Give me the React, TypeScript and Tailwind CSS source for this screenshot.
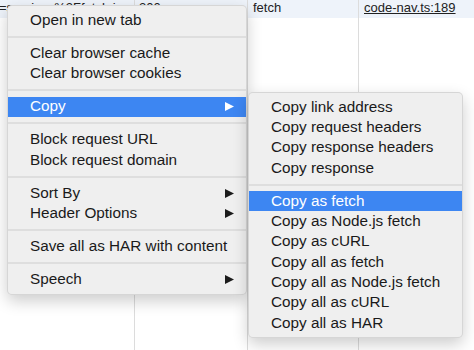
import React from "react";

type Entry = { label?: string; sep?: boolean; arrow?: boolean; active?: boolean };

const mainItems: Entry[] = [
  { label: "Open in new tab" },
  { sep: true },
  { label: "Clear browser cache" },
  { label: "Clear browser cookies" },
  { sep: true },
  { label: "Copy", arrow: true, active: true },
  { sep: true },
  { label: "Block request URL" },
  { label: "Block request domain" },
  { sep: true },
  { label: "Sort By", arrow: true },
  { label: "Header Options", arrow: true },
  { sep: true },
  { label: "Save all as HAR with content" },
  { sep: true },
  { label: "Speech", arrow: true },
];

const subItems: Entry[] = [
  { label: "Copy link address" },
  { label: "Copy request headers" },
  { label: "Copy response headers" },
  { label: "Copy response" },
  { sep: true },
  { label: "Copy as fetch", active: true },
  { label: "Copy as Node.js fetch" },
  { label: "Copy as cURL" },
  { label: "Copy all as fetch" },
  { label: "Copy all as Node.js fetch" },
  { label: "Copy all as cURL" },
  { label: "Copy all as HAR" },
];

function Arrow({ white }: { white?: boolean }) {
  return (
    <svg width="9" height="9" viewBox="0 0 9 9" className="shrink-0">
      <polygon points="0,0 9,4.5 0,9" fill={white ? "#ffffff" : "#1c1c1c"} />
    </svg>
  );
}

function Menu({ items }: { items: Entry[] }) {
  return (
    <div className="flex flex-col py-[4px]">
      {items.map((it, i) =>
        it.sep ? (
          <div key={i} className="h-[12.8px] flex items-center">
            <div className="h-[2px] w-full bg-[#dedede]" />
          </div>
        ) : (
          <div
            key={i}
            className={
              it.active
                ? "h-[20.33px] flex items-center justify-between pl-[22px] pr-[12px] bg-[#3d86f2] text-white"
                : "h-[20.33px] flex items-center justify-between pl-[22px] pr-[12px] text-[#1a1a1a]"
            }
          >
            <span className="whitespace-nowrap">{it.label}</span>
            {it.arrow && <Arrow white={it.active} />}
          </div>
        )
      )}
    </div>
  );
}

export default function App() {
  return (
    <div
      className="relative w-[474px] h-[350px] overflow-hidden bg-white"
      style={{ fontFamily: '"Liberation Sans", Arial, sans-serif' }}
    >
      {/* background table */}
      <div className="flex h-full text-[13px] leading-[15px] text-[#222]">
        <div className="w-[135px] border-r border-[#dcdcdc] flex flex-col">
          <div className="h-[18px] bg-[#eef3fa] overflow-hidden whitespace-nowrap -ml-[1px]">=services%2Ffetch.js</div>
        </div>
        <div className="w-[113px] border-r border-[#dcdcdc] flex flex-col">
          <div className="h-[18px] bg-[#eef3fa] pl-[4px]">200</div>
        </div>
        <div className="w-[111px] border-r border-[#dcdcdc] flex flex-col">
          <div className="h-[18px] bg-[#eef3fa] pl-[5px]">fetch</div>
        </div>
        <div className="flex-1 flex flex-col">
          <div className="h-[18px] bg-[#eef3fa] pl-[5px]">
            <span className="underline">code-nav.ts:189</span>
          </div>
        </div>
      </div>

      {/* main context menu */}
      <div className="absolute left-[7px] top-[5px] w-[240px] rounded-[5px] bg-[#efefef] border border-black/10 shadow-[0_6px_16px_rgba(0,0,0,0.2)] text-[15.3px] overflow-hidden">
        <Menu items={mainItems} />
      </div>

      {/* submenu */}
      <div className="absolute left-[248px] top-[92px] w-[215px] rounded-[5px] bg-[#efefef] border border-black/10 shadow-[0_6px_16px_rgba(0,0,0,0.2)] text-[15.3px] overflow-hidden">
        <Menu items={subItems} />
      </div>
    </div>
  );
}
